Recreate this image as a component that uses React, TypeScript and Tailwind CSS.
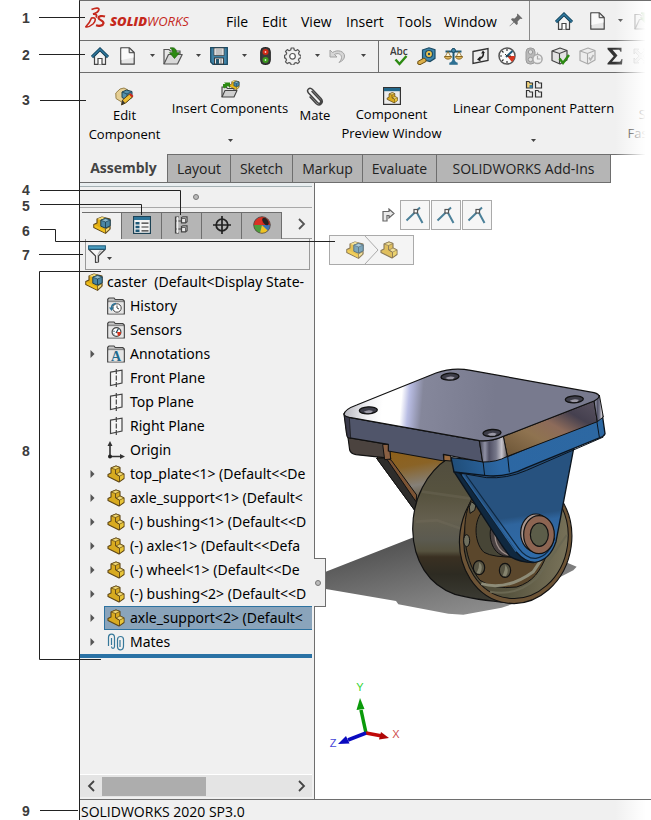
import React from "react";

type IconProps = { children: React.ReactNode; w?: number; h?: number };

function Icon({ children, w = 18, h = 18 }: IconProps) {
  return (
    <svg width={w} height={h} viewBox={`0 0 ${w} ${h}`} fill="none" className="shrink-0" aria-hidden="true">
      {children}
    </svg>
  );
}

/* ---------- shared icons ---------- */

function PartShape() {
  return (
    <>
      <path d="M1 9.5 4 8V3l5-2 4 1.5V7l4 2v4.5L12 17 1 11.5Z" fill="#d8aa1f" stroke="#5e4616" strokeWidth="1.1" strokeLinejoin="round" />
      <path d="M4 3l5-2 4 1.500-4.500 2ZM9 9l4-2 4 2-4.500 2.200Z" fill="#f0d873" stroke="#5e4616" strokeWidth=".7" strokeLinejoin="round" />
      <path d="M8.500 4.500V9l4 2.200V17" stroke="#5e4616" strokeWidth=".9" />
      <path d="M13 11.500 16.500 9.800V13L13 15.800Z" fill="#e8c63a" />
    </>
  );
}

const PartIcon = () => (
  <Icon>
    <PartShape />
  </Icon>
);

function AssemblyShape() {
  return (
    <>
      <path d="M.8 8.500 4 7V3l5-2 8 2v10L12.500 17.300.8 11.500Z" fill="#e0ad14" stroke="#5e4616" strokeWidth="1.100" strokeLinejoin="round" />
      <path d="M4 3l5-2 3 .800L8 4Z" fill="#f3dc7c" />
      <path d="M1.500 8.800 12 14.200v2.500L1.500 11.200Z" fill="#f1c11d" />
      <path d="M12.500 13 16.800 10.500V13l-4.300 4Z" fill="#f3dc7c" stroke="#5e4616" strokeWidth=".7" />
      <path d="M7.800 4.200 12.500 2.500l4.700 1.500v5.800l-4.700 2.400-4.700-2Z" fill="#4a86a4" stroke="#1d4254" strokeWidth="1" strokeLinejoin="round" />
      <path d="M7.800 4.200 12.500 2.500l4.700 1.500L12.500 6Z" fill="#8fbacd" stroke="#1d4254" strokeWidth=".7" />
      <path d="M12.500 6v6" stroke="#1d4254" strokeWidth=".9" />
    </>
  );
}

const AssemblyIcon = () => (
  <Icon>
    <AssemblyShape />
  </Icon>
);

const HomeIcon = () => (
  <Icon>
    <path d="M3.500 9v8.300h11V9L9 3.500Z" fill="#f4f4f4" stroke="#444" strokeWidth="1.200" />
    <path d="M7 17.500v-6h4v6" fill="#fff" stroke="#444" strokeWidth="1.200" />
    <path d="M1 10 9 2.200 17 10" stroke="#174a63" strokeWidth="3.200" />
    <path d="M1.200 9.800 9 2.200l7.800 7.600" stroke="#3179a0" strokeWidth="1.200" />
  </Icon>
);

const DocIcon = () => (
  <Icon w={15}>
    <path d="M.8.800h8.700l4.700 4.700v11.700H.8Z" fill="#e6e6e6" stroke="#444" strokeWidth="1.200" strokeLinejoin="round" />
    <path d="M1.500 1.500h7v5h5v4L1.500 13Z" fill="#fafafa" />
    <path d="M9.200 1v4.700h4.800" stroke="#444" />
  </Icon>
);

const OpenIcon = () => (
  <Icon w={20}>
    <path d="M1 17V2.500h5L7.500 4H17v4" fill="#e7e7e7" stroke="#555" strokeWidth="1.200" />
    <path d="M1 17 5.500 7.500H19.200L14.500 17Z" fill="#d9d9d9" stroke="#555" strokeWidth="1.200" strokeLinejoin="round" />
    <path d="M7 1c4-1 6.500.500 6.500 4.700h3L11.500 11.500 6.500 5.700h3.200C9.700 3.500 9 2 7 1Z" fill="#2c8a12" stroke="#1d6108" strokeWidth=".7" />
  </Icon>
);

const Caret = () => (
  <Icon w={5} h={3}>
    <path d="M0 0h5L2.500 3Z" fill="#444" />
  </Icon>
);

/* ---------- quick access toolbar ---------- */

const SaveIcon = () => (
  <Icon>
    <path d="M.7.700h16.600v16.600H3L.7 15Z" fill="#3f82a6" stroke="#1c4b64" strokeWidth="1.300" />
    <rect x="4" y="1" width="10" height="7.500" fill="#f5f5f5" stroke="#444" strokeWidth=".8" />
    <path d="M5.500 3h7M5.500 5h7M5.500 7h7" stroke="#777" strokeWidth=".8" />
    <rect x="4.500" y="11" width="9" height="6" fill="#e4e4e4" stroke="#333" strokeWidth=".9" />
    <rect x="6" y="12" width="3" height="5" fill="#255870" />
    <path d="M11 12v5" stroke="#777" />
  </Icon>
);

const LightIcon = () => (
  <Icon w={11}>
    <rect x=".7" y=".5" width="9.600" height="17" rx="4" fill="#3b3b3b" stroke="#222" />
    <circle cx="5.500" cy="5" r="3" fill="#cf2a17" />
    <circle cx="5.500" cy="13" r="3" fill="#3c9a1e" />
    <path d="M4.500 5h2M5.500 4v2M4.500 13h2M5.500 12v2" stroke="#fff" strokeWidth=".6" />
  </Icon>
);

const GearIcon = () => (
  <Icon w={17}>
    <path
      d="m7.200 1 2.600 0 .5 2 1.600.700 1.800-1.100 1.800 1.800-1 1.800.700 1.600 1.800.500v2.600l-1.900.500-.700 1.600 1.100 1.800-1.800 1.800-1.800-1-1.600.700-.5 1.900H7.200l-.5-1.900-1.600-.700-1.800 1-1.800-1.800 1-1.800-.700-1.600-1.200-.500V8.300l1.400-.500.700-1.600-1.200-1.800 1.800-1.800 1.800 1.100 1.600-.700Z"
      fill="#f0f0f0"
      stroke="#555"
      strokeWidth="1.200"
      strokeLinejoin="round"
    />
    <circle cx="8.500" cy="9.300" r="2.800" fill="#fff" stroke="#555" strokeWidth="1.200" />
  </Icon>
);

const UndoIcon = () => (
  <Icon w={17}>
    <path d="M1 3v7h7L5.500 7.500C9 5.500 12.500 7 12.500 10.500c0 2-1 3.500-2.500 5 3.500-1.500 5.500-3.500 5.500-6.500C15.500 4.500 9 2 3.500 5.500Z" fill="#d6d6d6" stroke="#a2a2a2" />
  </Icon>
);

const SpellIcon = () => (
  <Icon w={19} h={20}>
    <text x="0" y="9" fontFamily="Open Sans, sans-serif" fontSize="10" fontWeight="600" fill="#3c3c3c">Abc</text>
    <path d="m5.500 13.500 4 4.500 7-8" stroke="#2c8a12" strokeWidth="2.400" />
  </Icon>
);

const MeasureIcon = () => (
  <Icon w={19}>
    <path d="M5.500 3 12 .800l6 2v8.500l-5 3.200-7.500-2Z" fill="#3f86ab" stroke="#1c4b64" strokeWidth="1.200" />
    <path d="M.8 14.500 7 11l2 1.500v2l-6 3.200-2.200-.7Z" fill="#dcb04a" stroke="#6b4e12" strokeWidth="1" />
    <circle cx="12" cy="7" r="3.500" fill="#f0c64f" stroke="#1c4b64" strokeWidth="1.200" />
    <circle cx="12" cy="7" r="1.200" fill="#1c4b64" />
  </Icon>
);

const MassIcon = () => (
  <Icon w={19}>
    <path d="M9.500 1v15M1.500 4.500h16M5.500 16.500h8" stroke="#1c5876" strokeWidth="2" />
    <circle cx="9.500" cy="3.500" r="2" fill="#3f86ab" stroke="#1c4b64" />
    <path d="m1 10 3-5.500L7 10ZM12 10l3-5.500L18 10Z" fill="#fff6dd" stroke="#76540f" strokeWidth=".7" />
    <path d="M.5 9.500h7c0 3.500-7 3.500-7 0ZM11.500 9.500h7c0 3.500-7 3.500-7 0Z" fill="#e0b65a" stroke="#76540f" strokeWidth=".8" />
    <path d="M5 17.500 9.500 12l4.500 5.500Z" fill="#2d7094" />
  </Icon>
);

const SectionIcon = () => (
  <Icon w={17}>
    <path d="m1 4.500 15-3v12l-15 3Z" fill="#eee" stroke="#333" strokeWidth="1.300" />
    <path d="M11 5c1 2.500 0 5.500-3.500 6.500" stroke="#222" strokeWidth="1.600" />
    <path d="M5 12.500 8.500 9v5.500ZM9 6.500 11 3.500l2 2.500Z" fill="#222" />
  </Icon>
);

const GaugeIcon = () => (
  <Icon>
    <circle cx="9" cy="9" r="8" fill="#fafafa" stroke="#555" strokeWidth="1.500" />
    <path d="M9 9h8a8 8 0 0 1-3 6Z" fill="#d9341c" />
    <path d="M9 2v2M2 9h2M4 4l1.500 1.500M4 14l1.500-1.500M9 14v2" stroke="#333" strokeWidth="1.200" />
    <path d="m8 10 6.500-6" stroke="#1d5877" strokeWidth="2" />
    <path d="M9 9 7 7M9 9h4" stroke="#333" />
  </Icon>
);

const PerfIcon = () => (
  <Icon w={19}>
    <rect x="1" y="1" width="9" height="16" rx="4" fill="#b9b9b9" stroke="#9a9a9a" />
    <circle cx="5.500" cy="5" r="2.200" fill="#dedede" stroke="#999" />
    <circle cx="5.500" cy="12.500" r="2.200" fill="#dedede" stroke="#999" />
    <circle cx="12.500" cy="12" r="4.600" fill="#f0f0f0" stroke="#aaa" strokeWidth="1.500" />
    <path d="M12.500 9v3h3M12.500 5.500v2" stroke="#aaa" strokeWidth="1.200" />
  </Icon>
);

function CubeCheck({ stroke, check, fill, bold }: { stroke: string; check: string; fill: string; bold?: boolean }) {
  return (
    <Icon w={19}>
      <path d="M1 4 9 1l7 2.500v9.500L9 17 1 13.500Z" fill={fill} stroke={stroke} strokeWidth="1.200" strokeLinejoin="round" />
      <path d="M1 4l7.500 2.500L16 3.500M8.500 6.500V17" stroke={stroke} strokeWidth="1.100" />
      {bold ? (
        <path d="m8.500 11.500 3.500 4.500 6-8" stroke={check} strokeWidth="2.400" />
      ) : (
        <path d="m10 10.500 1.500 2.500 3-5" stroke={check} strokeWidth="1.600" />
      )}
    </Icon>
  );
}

const SigmaIcon = () => (
  <Icon w={16}>
    <path d="M.5.800h14v4h-1.200C13 3.200 12.500 2.800 11 2.800H5.500l5 5.800-5.500 6.200h6.500c1.800 0 2.500-.8 3-2.800h1l-.5 5.500H.5v-1.300l6.200-7L.5 2.200Z" fill="#333" />
  </Icon>
);

const ExplodeIcon = () => (
  <Icon>
    <path d="M2 2h5L5.500 3.500l3.500 3.500 3.500-3.500L11 2h5v5l-1.500-1.500L11 9l3.500 3.500L16 11v5h-5l1.500-1.500L9 11l-3.500 3.500L7 16H2v-5l1.500 1.500L7 9 3.500 5.500 2 7Z" fill="#ddd" stroke="#aaa" strokeWidth=".8" />
  </Icon>
);

const PinIcon = () => (
  <Icon w={14} h={14}>
    <path d="m8.500.500 5 5-1.300.600-1-.300-2.600 2.600.2 2.600-1.300 1L5 9.500.8 13.300.5 13 4.500 9 2 6.500l1-1.300 2.600.2L8.200 2.800l-.3-1Z" fill="#6a6a6a" />
  </Icon>
);

/* ---------- ribbon icons ---------- */

const EditComponentIcon = () => (
  <Icon w={19} h={19}>
    <path d="M.8 6 5 2l4-1 4 2v11l-4 2.500-8-5Z" fill="#e6cf94" stroke="#99824a" />
    <path d="M7 5 11.500 3 17 4.500v6L12 13 7 10.500Z" fill="#5590ac" stroke="#1d4254" />
    <path d="M7 5l5 2 5-2.500M12 7v5" stroke="#1d4254" strokeWidth=".8" />
    <path d="m6.500 18 1-5 7-6 3 3-7 6Z" fill="#edbd35" stroke="#4d3a10" strokeWidth=".9" />
    <path d="m14 7.500 1.500-1.300 3 2.800-1.500 1.500Z" fill="#d1281c" />
    <path d="m6.500 18 1-5 2.500 3Z" fill="#333" />
  </Icon>
);

const InsertComponentIcon = () => (
  <Icon w={19}>
    <path d="M1 17V7h4l1.500 1.500H13V11" fill="#ddd" stroke="#444" strokeWidth="1.100" />
    <path d="M1 17 4 10.500h12L13 17Z" fill="#cfcfcf" stroke="#444" strokeWidth="1.100" strokeLinejoin="round" />
    <path d="M2 8V4l5.500-.2V5L3.500 7ZM3 2.500h6V8L7 6 3.500 8.500 2.500 6.500 5 4.500Z" fill="#2c8a12" />
    <g transform="translate(8.500 0) scale(.56)">
      <AssemblyShape />
    </g>
  </Icon>
);

const ClipIcon = () => (
  <Icon w={18} h={19}>
    <path d="M6 4.500 14 13c2 2.500-.5 4.500-2.500 2.500L2.500 6C0 3 3.500-.500 6.500 2.500L15 11.500c3.500 4.500-1.500 8.500-5 5L4 10" stroke="#444" strokeWidth="1.500" strokeLinecap="round" />
  </Icon>
);

const PreviewIcon = () => (
  <Icon>
    <rect x=".6" y=".6" width="16.800" height="16.800" fill="#ececec" stroke="#333" strokeWidth="1.200" />
    <path d="M1 1h16v3.200H1Z" fill="#23688b" />
    <g transform="translate(3.500 5) scale(.64)">
      <PartShape />
    </g>
  </Icon>
);

const PatternIcon = () => (
  <Icon>
    <path d="M1.500 1.500H4L5 3h2.500v5h-6Z" fill="#f1d27a" stroke="#333" strokeWidth="1.200" />
    <path d="M10.500 1.500H13L14 3h2.500v5h-6ZM1.500 10.500H4L5 12h2.500v5h-6ZM10.500 10.500H13l1 1.500h2.500v5h-6Z" fill="#eee" stroke="#333" strokeWidth="1.200" />
    <path d="M4.500 5h3v3h-3Z" fill="#3a7d9f" />
  </Icon>
);

const FastenerIcon = () => (
  <Icon>
    <path d="M1 1h8v6H1ZM3 7v10h4V7" fill="#ddd" stroke="#555" />
  </Icon>
);

/* ---------- panel icons ---------- */

const PropertyIcon = () => (
  <Icon>
    <rect x=".6" y=".6" width="16.800" height="16.800" fill="#f4f4f4" stroke="#1d4254" strokeWidth="1.200" />
    <path d="M1 1h16v3H1Z" fill="#2d7498" />
    <path d="M2.500 6h4v2.500h-4ZM2.500 9.800h4v2.500h-4ZM2.500 13.500h4V16h-4Z" fill="#1d5877" />
    <path d="M8.500 7.200h7M8.500 11h7M8.500 14.800h7" stroke="#333" strokeWidth="1.200" />
  </Icon>
);

const ConfigIcon = () => (
  <Icon w={15}>
    <path d="M5 1H1.500v16H5M1.500 5H7M1.500 13H7" stroke="#444" strokeWidth="1.200" />
    <path d="M3.500 1v16" stroke="#eee" strokeWidth="1.500" />
    <path d="M7.500 1.500 9 .800h4v5l-1.500 1h-4ZM7.500 10.500 9 9.800h4v5l-1.500 1h-4Z" fill="#e9e9e9" stroke="#444" strokeWidth="1.200" />
    <path d="M7.500 2.500h4v4M7.500 11.500h4v4" stroke="#444" strokeWidth=".8" />
  </Icon>
);

const TargetIcon = () => (
  <Icon>
    <circle cx="9" cy="9" r="5.800" stroke="#222" strokeWidth="1.800" />
    <path d="M9 0v18M0 9h18" stroke="#222" strokeWidth="1.700" />
  </Icon>
);

const AppearanceIcon = () => (
  <Icon>
    <circle cx="9" cy="9" r="8.300" fill="#3c73b4" />
    <path d="M9 9 .7 9A8.300 8.300 0 0 1 9.500.700Z" fill="#3f78b8" />
    <path d="M9 9V.700a8.300 8.300 0 0 1 8.300 8.300Z" fill="#d32b1c" />
    <path d="M3 3.500A8.300 8.300 0 0 1 9 .700V9H.700C.7 6 1.500 5 3 3.500Z" fill="#d93224" />
    <path d="M.7 9H9l-2 8A8.300 8.300 0 0 1 .7 9Z" fill="#4d9d3b" />
    <path d="M9 9 7 17a8.300 8.300 0 0 0 8-2.500Z" fill="#efc321" />
    <path d="M9 9h8.300a8.300 8.300 0 0 1-2.300 5.500Z" fill="#3c73b4" />
    <ellipse cx="12.500" cy="5.500" rx="2.400" ry="4.200" transform="rotate(-35 12.500 5.500)" fill="#222" />
    <circle cx="9" cy="9" r="8.300" stroke="#5b4b3f" strokeWidth=".8" />
  </Icon>
);

const FilterIcon = () => (
  <Icon>
    <path d="M1 4.500h16l-6.500 6.500v6l-3 .500V11Z" fill="#f6f6f6" stroke="#444" strokeWidth="1.200" strokeLinejoin="round" />
    <path d="M11.500 5.500h3L10 10v6.500l-.8.200V10Z" fill="#b9b9b9" />
    <rect x=".6" y=".8" width="16.800" height="3.400" fill="#4a9dc0" stroke="#1c5876" />
  </Icon>
);

function FolderIcon({ children }: { children: React.ReactNode }) {
  return (
    <Icon>
      <path d="M.7 17V2.200L2 1h5l1.200 1.500H15.800L17.300 4v13Z" fill="#c9c9c9" stroke="#444" strokeWidth="1.200" />
      <path d="M1.500 5.500h15v11h-15Z" fill="#e6e6e6" />
      <path d="M1 4.200h16" stroke="#555" strokeWidth=".8" />
      {children}
    </Icon>
  );
}

const HistoryIcon = () => (
  <FolderIcon>
    <circle cx="10" cy="11" r="4.200" fill="#fff" stroke="#444" />
    <path d="M10 8.500V11l2 1" stroke="#444" />
    <path d="M9 6.500c-3 0-4.500 2-4.500 5" stroke="#2d7498" strokeWidth="1.600" />
    <path d="M2 10.500h5L4.500 14Z" fill="#2d7498" />
  </FolderIcon>
);

const SensorIcon = () => (
  <FolderIcon>
    <circle cx="9.500" cy="11" r="4.400" fill="#fff" stroke="#444" strokeWidth="1.200" />
    <path d="M10 11h4a4 4 0 0 1-3 4Z" fill="#d9341c" />
    <path d="m9 12 2.500-4.500M6.500 10l1 .500M6.500 13h1" stroke="#1d4254" strokeWidth="1.200" />
  </FolderIcon>
);

const AnnotationIcon = () => (
  <FolderIcon>
    <text x="9" y="16" textAnchor="middle" fontFamily="Liberation Serif, serif" fontWeight="700" fontSize="14" fill="#1f6a8e">A</text>
  </FolderIcon>
);

const PlaneIcon = () => (
  <Icon>
    <path d="m3.500 3.200 11.500-2V14L3.500 16.500Z" fill="#f5f5f5" stroke="#444" strokeWidth="1.200" />
    <path d="M9.300 0v18" stroke="#444" strokeWidth="1.200" strokeDasharray="5 1.500" />
  </Icon>
);

const OriginIcon = () => (
  <Icon>
    <path d="M3 3v12.500h12" stroke="#333" strokeWidth="1.600" />
    <path d="M.5 5 3 0l2.500 5ZM13 13l5 2.500-5 2.500Z" fill="#333" />
    <circle cx="3" cy="15.500" r="2" fill="#222" />
  </Icon>
);

const MatesIcon = () => (
  <Icon>
    <path d="M4.500 5v7M1.500 13V4.500C1.500 0 7.500 0 7.500 4.500v9c0 2.500-3 2.500-3 0" stroke="#36789a" strokeWidth="1.200" />
    <path d="M13 7v7M10.500 14V6.500c0-4 6-4 6 0V13c0 5-5.500 5-6 1" stroke="#36789a" strokeWidth="1.200" />
  </Icon>
);

const MateLineIcon = () => (
  <Icon w={20}>
    <path d="M1.500 14.500 15 1.500M11 5l6.500 12" stroke="#4b8099" strokeWidth="2" />
    <rect x="9" y="3.500" width="3.500" height="3.500" fill="#fff" stroke="#555" strokeWidth="1.200" />
  </Icon>
);

/* ---------- header ---------- */

function Logo() {
  return (
    <div className="flex h-full w-[132px] shrink-0 items-center gap-1 pl-[5px] text-[#c5281c]">
      <svg width="21" height="22" viewBox="0 0 21 22" fill="none" className="mb-[6px]" aria-hidden="true">
        <path d="M6.500 2.500C11 .500 14.500.500 13.800 3 13 5.200 10 6.500 8 7.200c3.500-.300 4.500 1 3 3.300" stroke="currentColor" strokeWidth="1.800" />
        <path d="M6.500 11c5-1 4.500 3 1.500 6C5.500 19 3 20.500.8 19.800 3 17.500 5.500 14 6.500 11Z" stroke="currentColor" strokeWidth="1.600" />
        <path d="M20 9.500c-3-1-6.500-.5-6.500 1.500 0 2 5.500 2.500 5 5.300-.5 2.500-4.500 3-7.500 2" stroke="currentColor" strokeWidth="2.200" />
      </svg>
      <span className="font-['Open_Sans',sans-serif] text-[13px] leading-4 italic">
        <b className="font-extrabold">SOLID</b>WORKS
      </span>
    </div>
  );
}

function MenuBar() {
  return (
    <header className="flex h-10 items-center overflow-hidden border-b border-[#6e6e6e] bg-[#f0f0f0]">
      <Logo />
      <nav className="flex h-full shrink-0 items-center pt-[3px] pl-[14px]">
        <button className="w-9 text-left">File</button>
        <button className="w-[39px] text-left">Edit</button>
        <button className="w-[45px] text-left">View</button>
        <button className="w-[51px] text-left">Insert</button>
        <button className="w-[47px] text-left">Tools</button>
        <button className="w-[65px] text-left">Window</button>
        <button className="pb-1" aria-label="Pin menu"><PinIcon /></button>
      </nav>
      <div className="ml-[6px] flex h-full shrink-0 items-center border-l border-[#8a8a8a] pl-[25px]">
        <button aria-label="Home" className="w-[35px]"><HomeIcon /></button>
        <button aria-label="New" className="w-[28px]"><DocIcon /></button>
        <button aria-label="New options" className="w-[16px]"><Caret /></button>
        <button aria-label="Open"><OpenIcon /></button>
      </div>
    </header>
  );
}

function Tool({ label, className, children }: { label: string; className: string; children: React.ReactNode }) {
  return (
    <button aria-label={label} className={`flex shrink-0 justify-start ${className}`}>
      {children}
    </button>
  );
}

function ToolBar() {
  return (
    <div className="flex h-8 items-center overflow-hidden border-b border-[#6e6e6e] bg-[#f0f0f0] pl-[11px] *:pb-[2px]">
      <Tool label="Home" className="w-[29px]"><HomeIcon /></Tool>
      <Tool label="New" className="w-[30px]"><DocIcon /></Tool>
      <Tool label="New options" className="w-[13px]"><Caret /></Tool>
      <Tool label="Open" className="w-[33px]"><OpenIcon /></Tool>
      <Tool label="Open options" className="w-[14px]"><Caret /></Tool>
      <Tool label="Save" className="w-[32px]"><SaveIcon /></Tool>
      <Tool label="Save options" className="w-[18px]"><Caret /></Tool>
      <Tool label="Rebuild" className="w-[24px]"><LightIcon /></Tool>
      <Tool label="Options" className="w-[31px]"><GearIcon /></Tool>
      <Tool label="More options" className="w-[14px]"><Caret /></Tool>
      <Tool label="Undo" className="w-[32px]"><UndoIcon /></Tool>
      <Tool label="Undo options" className="w-[17px]"><Caret /></Tool>
      <div className="flex h-full items-center border-l border-[#6e6e6e] pl-[11px]">
        <Tool label="Spelling" className="w-[27px]"><SpellIcon /></Tool>
        <Tool label="Measure" className="w-[27px]"><MeasureIcon /></Tool>
        <Tool label="Mass properties" className="w-[28px]"><MassIcon /></Tool>
        <Tool label="Section properties" className="w-[26px]"><SectionIcon /></Tool>
        <Tool label="Sensor" className="w-[27px]"><GaugeIcon /></Tool>
        <Tool label="Performance" className="w-[26px]"><PerfIcon /></Tool>
        <Tool label="Check" className="w-[28px]"><CubeCheck stroke="#444" check="#2c8a12" fill="#e2e2e2" bold /></Tool>
        <Tool label="Check active" className="w-[28px]"><CubeCheck stroke="#aaa" check="#b5b5b5" fill="#ececec" /></Tool>
        <Tool label="Equations" className="w-[25px]"><SigmaIcon /></Tool>
        <Tool label="Explode" className="w-[18px]"><ExplodeIcon /></Tool>
      </div>
    </div>
  );
}

type RibbonProps = { icon: React.ReactNode; label: React.ReactNode; className: string; menu?: boolean };

function RibbonButton({ icon, label, className, menu }: RibbonProps) {
  return (
    <button className={`flex shrink-0 flex-col items-center whitespace-nowrap leading-[19px] ${menu ? "pt-[7px]" : "pt-[14px]"} ${className}`}>
      {icon}
      <span className={menu ? "pt-px" : ""}>{label}</span>
      {menu && <span className="pt-[21px]"><Caret /></span>}
    </button>
  );
}

function Ribbon() {
  return (
    <div className="flex h-[81px] items-start gap-[10px] overflow-hidden bg-[#f0f0f0] pl-2 text-[13px]">
      <RibbonButton className="w-[73px]" icon={<EditComponentIcon />} label={<>Edit<br />Component</>} />
      <RibbonButton className="w-[118px]" menu icon={<InsertComponentIcon />} label="Insert Components" />
      <RibbonButton className="w-[32px]" icon={<ClipIcon />} label="Mate" />
      <RibbonButton className="w-[101px]" icon={<PreviewIcon />} label={<>Component<br />Preview Window</>} />
      <RibbonButton className="w-[163px]" menu icon={<PatternIcon />} label="Linear Component Pattern" />
      <RibbonButton className="w-[64px]" icon={<FastenerIcon />} label={<>Smart<br />Fasteners</>} />
    </div>
  );
}

function RibbonTabs() {
  const tab = "h-[29px] shrink-0 border-y border-r border-[#6e6e6e] bg-[#b5b5b5] text-center text-[#222]";
  return (
    <div className="flex h-[29px] bg-white">
      <div className="w-[88px] shrink-0 border-r border-b border-[#6e6e6e] bg-[#f0f0f0] text-center font-bold text-[#444]">
        <button className="h-7">Assembly</button>
      </div>
      <button className={`${tab} w-[63px]`}>Layout</button>
      <button className={`${tab} w-[62px]`}>Sketch</button>
      <button className={`${tab} w-[70px]`}>Markup</button>
      <button className={`${tab} w-[74px]`}>Evaluate</button>
      <button className={`${tab} w-[174px]`}>SOLIDWORKS Add-Ins</button>
      <div className="flex-1 border-t border-[#6e6e6e]" />
    </div>
  );
}

/* ---------- feature manager ---------- */

type TreeItem = { name: string; icon: React.ReactNode; expandable?: boolean; selected?: boolean };

const treeItems: TreeItem[] = [
  { name: "History", icon: <HistoryIcon /> },
  { name: "Sensors", icon: <SensorIcon /> },
  { name: "Annotations", icon: <AnnotationIcon />, expandable: true },
  { name: "Front Plane", icon: <PlaneIcon /> },
  { name: "Top Plane", icon: <PlaneIcon /> },
  { name: "Right Plane", icon: <PlaneIcon /> },
  { name: "Origin", icon: <OriginIcon /> },
  { name: "top_plate<1> (Default<<De", icon: <PartIcon />, expandable: true },
  { name: "axle_support<1> (Default<", icon: <PartIcon />, expandable: true },
  { name: "(-) bushing<1> (Default<<D", icon: <PartIcon />, expandable: true },
  { name: "(-) axle<1> (Default<<Defa", icon: <PartIcon />, expandable: true },
  { name: "(-) wheel<1> (Default<<De", icon: <PartIcon />, expandable: true },
  { name: "(-) bushing<2> (Default<<D", icon: <PartIcon />, expandable: true },
  { name: "axle_support<2> (Default<", icon: <PartIcon />, expandable: true, selected: true },
  { name: "Mates", icon: <MatesIcon />, expandable: true },
];

function TreeRow({ item }: { item: TreeItem }) {
  return (
    <li className="flex h-6 items-center overflow-hidden">
      <span className="flex w-6 shrink-0 justify-center">
        {item.expandable && (
          <button aria-label={`Expand ${item.name}`}>
            <Icon w={5} h={8}>
              <path d="M.5 0v8l4-4Z" fill="#555" />
            </Icon>
          </button>
        )}
      </span>
      <button
        className={`flex h-6 min-w-0 flex-1 items-center gap-[5px] overflow-hidden border pl-[2px] whitespace-nowrap ${
          item.selected ? "border-r-0 border-[#2d72a0] bg-[#8aa4bb] pr-px" : "border-transparent"
        }`}
      >
        {item.icon}
        <span>{item.name}</span>
      </button>
    </li>
  );
}

function PanelTabs() {
  const tab = "flex h-[26px] w-10 items-center justify-center border-r border-[#6e6e6e] bg-[#b5b5b5]";
  return (
    <div className="mr-[2px] ml-[2px] flex h-[27px] border-b border-[#999]">
      <div className="flex border-t border-[#6e6e6e] *:pb-[2px]">
        <button aria-label="FeatureManager" className="flex h-[26px] w-10 items-center justify-center border-r border-[#6e6e6e] bg-[#f0f0f0]">
          <AssemblyIcon />
        </button>
        <button aria-label="PropertyManager" className={tab}><PropertyIcon /></button>
        <button aria-label="ConfigurationManager" className={tab}><ConfigIcon /></button>
        <button aria-label="DimXpertManager" className={tab}><TargetIcon /></button>
        <button aria-label="DisplayManager" className={tab}><AppearanceIcon /></button>
      </div>
      <button aria-label="More tabs" className="flex flex-1 items-center justify-center pb-[2px] pl-[10px]">
        <Icon w={8} h={12}>
          <path d="m1 1 5 5-5 5" stroke="#555" strokeWidth="1.800" />
        </Icon>
      </button>
    </div>
  );
}

function Grip() {
  return <span className="block size-[6px] rounded-full border border-[#777] bg-[#bbb]" />;
}

function FeaturePanel() {
  return (
    <aside className="relative z-10 flex w-[235px] shrink-0 flex-col border-r border-[#6e6e6e] bg-[#f0f0f0]">
      <div className="mr-[2px] h-1 border-b border-[#a5b0b3] bg-[#e9eef0]" />
      <div className="mr-[2px] mb-1 flex h-[21px] items-center justify-center border-b border-[#a8a8a8]">
        <Grip />
      </div>
      <PanelTabs />
      <div className="mr-1 ml-[5px] flex h-[31px] items-center gap-px border border-t-0 border-[#999] pl-[2px]">
        <button aria-label="Filter" className="flex items-end gap-px">
          <FilterIcon />
          <span className="pb-[3px]"><Caret /></span>
        </button>
        <input aria-label="Filter tree" className="h-6 min-w-0 flex-1 bg-transparent outline-none" />
      </div>
      <div className="mr-[2px] border-b-4 border-[#2a72a5] font-['Noto_Sans','Open_Sans',sans-serif]">
        <button className="flex h-6 w-full items-center gap-1 overflow-hidden pl-[5px] whitespace-pre">
          <AssemblyIcon />
          <span>caster  (Default&lt;Display State-</span>
        </button>
        <ul>
          {treeItems.map((item) => (
            <TreeRow key={item.name} item={item} />
          ))}
        </ul>
      </div>
      <div className="mt-auto mr-[2px] mb-[2px] flex h-[23px] items-center border-t border-white bg-[#e4e4e4]">
        <button aria-label="Scroll left" className="flex w-[22px] justify-center">
          <Icon w={8} h={12}>
            <path d="M7 1 2 6l5 5" stroke="#444" strokeWidth="1.800" />
          </Icon>
        </button>
        <div className="flex h-[19px] flex-1">
          <div className="w-[104px] bg-[#adadad]" />
        </div>
        <button aria-label="Scroll right" className="flex w-5 justify-center">
          <Icon w={8} h={12}>
            <path d="m1 1 5 5-5 5" stroke="#444" strokeWidth="1.800" />
          </Icon>
        </button>
      </div>
      <div className="absolute top-[375px] -right-3 flex h-[49px] w-3 items-center justify-start border border-l-0 border-[#6e6e6e] bg-[#f0f0f0] pl-px">
        <Grip />
      </div>
    </aside>
  );
}

/* ---------- graphics area ---------- */

function CasterModel() {
  return (
    <svg width="300" height="265" viewBox="0 0 900 795" fill="none" strokeLinejoin="round" aria-label="Caster model" role="img">
      <defs>
        <linearGradient id="top" gradientUnits="userSpaceOnUse" x1="70" y1="150" x2="520" y2="190">
          <stop offset="0" stopColor="#b4b4bb" />
          <stop offset=".16" stopColor="#f0f0f3" />
          <stop offset=".26" stopColor="#ffffff" />
          <stop offset=".38" stopColor="#ffffff" />
          <stop offset=".43" stopColor="#b9bde4" />
          <stop offset=".52" stopColor="#85879b" />
          <stop offset="1" stopColor="#787a8e" />
        </linearGradient>
        <linearGradient id="shadow" x1="0" y1="0" x2=".6" y2="1">
          <stop offset="0" stopColor="#3c3c3c" />
          <stop offset=".4" stopColor="#5c5c5c" />
          <stop offset=".8" stopColor="#7e7e7e" />
          <stop offset="1" stopColor="#8d8d8d" />
        </linearGradient>
        <linearGradient id="tread" x1="0" y1="0" x2="0" y2="1">
          <stop offset="0" stopColor="#514d3e" />
          <stop offset=".25" stopColor="#57533f" />
          <stop offset=".42" stopColor="#645f4e" />
          <stop offset=".56" stopColor="#5b5a50" />
          <stop offset=".64" stopColor="#56523f" />
          <stop offset=".68" stopColor="#3a3022" />
          <stop offset=".8" stopColor="#2d2b22" />
          <stop offset="1" stopColor="#3d3d35" />
        </linearGradient>
        <linearGradient id="rim" x1="0" y1="0" x2="1" y2="0">
          <stop offset="0" stopColor="#4b4636" />
          <stop offset=".5" stopColor="#57543f" />
          <stop offset="1" stopColor="#787259" />
        </linearGradient>
        <linearGradient id="copper" x1="0" y1="1" x2="1" y2="0">
          <stop offset="0" stopColor="#6a5335" />
          <stop offset=".35" stopColor="#8f7350" />
          <stop offset=".55" stopColor="#8d6b5a" />
          <stop offset=".75" stopColor="#45404f" />
          <stop offset="1" stopColor="#5a5361" />
        </linearGradient>
        <linearGradient id="gold" x1="0" y1="0" x2=".2" y2="1">
          <stop offset="0" stopColor="#8f5d12" />
          <stop offset=".4" stopColor="#8a6326" />
          <stop offset=".7" stopColor="#858078" />
          <stop offset="1" stopColor="#5a4c30" />
        </linearGradient>
        <linearGradient id="blueEdge" gradientUnits="userSpaceOnUse" x1="390" y1="330" x2="855" y2="220">
          <stop offset="0" stopColor="#1f4c77" />
          <stop offset=".3" stopColor="#2c67a3" />
          <stop offset="1" stopColor="#2d68a2" />
        </linearGradient>
        <linearGradient id="blueFace" gradientUnits="userSpaceOnUse" x1="600" y1="340" x2="640" y2="620">
          <stop offset="0" stopColor="#27527f" />
          <stop offset=".5" stopColor="#27527f" />
          <stop offset=".58" stopColor="#2f659e" />
          <stop offset="1" stopColor="#2f6caa" />
        </linearGradient>
        <linearGradient id="chrome" x1="0" y1="0" x2="1" y2="0">
          <stop offset="0" stopColor="#3e3f4e" />
          <stop offset=".2" stopColor="#8f90a4" />
          <stop offset=".35" stopColor="#505064" />
          <stop offset=".6" stopColor="#77788a" />
          <stop offset=".8" stopColor="#c6c4cc" />
          <stop offset="1" stopColor="#5b5557" />
        </linearGradient>
      </defs>

      {/* ground shadow */}
      <path d="M0 657 277 548 500 500 738 622 770 635 760 646 690 682 600 740 545 758 430 779 385 776 235 748 228 738 0 699Z" fill="url(#shadow)" />

      {/* rear support */}
      <path d="M170 310 208 268 385 300 380 325 292 440 284 466Z" fill="url(#gold)" stroke="#111" strokeWidth="3" />
      <path d="M170 310 200 308 292 436 284 466Z" fill="#2e2d2b" stroke="#111" strokeWidth="3" />
      <path d="M196 306 214 316 290 420 288 440Z" fill="#7c5434" stroke="#111" strokeWidth="3" />
      <path d="M84 247 206 268 212 312 192 308 108 299Q92 296 89 285Z" fill="#4b433f" stroke="#111" strokeWidth="3.500" />
      <path d="M188 268 208 268 212 312 194 314Z" fill="#8a6043" stroke="#111" strokeWidth="3" />

      {/* wheel tread */}
      <path d="M385 310C320 352 278 430 278 522C280 618 325 690 405 718Q470 736 590 745L640 560 460 330Z" fill="url(#tread)" stroke="#111" strokeWidth="3.500" />
      <path d="M306 410 450 430M288 500 350 496 420 520" stroke="#777260" strokeWidth="8" opacity=".3" />

      {/* wheel rim and hub */}
      <ellipse cx="587" cy="552" rx="168" ry="194" transform="rotate(8 587 552)" fill="#6d5436" stroke="#111" strokeWidth="3.500" />
      <ellipse cx="588" cy="550" rx="156" ry="181" transform="rotate(8 588 550)" fill="url(#rim)" stroke="#111" strokeWidth="3" />
      <path d="M462 420C420 480 425 610 480 676Q520 704 590 696C640 680 660 650 680 600L600 450Z" fill="#5b472c" stroke="#111" strokeWidth="3" />
      <path d="M484 686Q560 708 640 650L700 560" stroke="#8e8c78" strokeWidth="9" />
      <path d="M510 710Q590 725 650 670L740 540" stroke="#6b6853" strokeWidth="6" />
      <path d="M500 460C460 480 458 560 492 592Q520 608 590 606L560 500Z" fill="#474536" stroke="#111" strokeWidth="3" />
      <path d="M518 505C502 530 510 600 560 604L600 610 590 540Z" fill="#4a4242" stroke="#111" strokeWidth="3" />
      <path d="M530 520C518 550 530 590 570 602" stroke="#9c8e8a" strokeWidth="4" />
      <ellipse cx="440" cy="557" rx="9" ry="18" fill="#70705f" stroke="#111" strokeWidth="3" />
      <path d="M454 440Q444 455 450 475L464 466 468 450Z" fill="#70705f" stroke="#111" strokeWidth="3" />
      <ellipse cx="477" cy="638" rx="17" ry="21" fill="#575443" stroke="#111" strokeWidth="3.500" />
      <path d="M478 622q14 14 2 34l-10-2q8-16 8-32Z" fill="#85836e" />
      <ellipse cx="555" cy="646" rx="17" ry="21" fill="#575443" stroke="#111" strokeWidth="3.500" />
      <path d="M556 630q14 14 2 34l-10-2q8-16 8-32Z" fill="#85836e" />

      {/* front support */}
      <path d="M402 350 438 354 600 560 640 623Q600 622 570 605L545 570Z" fill="#10283f" stroke="#0b141e" strokeWidth="4" />
      <path d="M420 354 763 270 708 560Q690 615 645 622Q615 622 588 590Z" fill="url(#blueFace)" stroke="#0b141e" strokeWidth="4" />
      <path d="M438 360 596 580Q620 612 648 610 690 602 704 548" stroke="#0e2740" strokeWidth="3.500" />
      <path d="M428 360 588 590" stroke="#2c639b" strokeWidth="4" />
      <path d="M393 308 490 318 564 304 848 186 855 236Q852 244 840 248L620 338Q560 368 500 362L402 351Z" fill="url(#blueEdge)" stroke="#0b141e" strokeWidth="4" />
      <path d="M402 351 500 368Q560 372 620 346L850 246M489 318 494 362M563 304 568 352M830 196 838 246" stroke="#0b141e" strokeWidth="3" />
      <path d="M372 298 392 302 393 318 370 316Z" fill="#9a6a3e" stroke="#111" strokeWidth="3" />

      {/* axle */}
      <ellipse cx="648" cy="534" rx="46" ry="57" fill="#a9968f" stroke="#111" strokeWidth="3.500" />
      <ellipse cx="657" cy="539" rx="46" ry="57" fill="#8d6552" stroke="#111" strokeWidth="3.500" />
      <ellipse cx="658" cy="539" rx="27" ry="35" fill="#5c5d49" stroke="#111" strokeWidth="3.500" />

      {/* top plate */}
      <path d="M72 176 88 187 478 257 488 321 370 298 372 318 205 288 205 268 84 248Q80 242 79 232Z" fill="#50556a" stroke="#111" strokeWidth="3.500" />
      <path d="M72 176 88 187 92 250 82 246Z" fill="#3a3a4a" stroke="#111" strokeWidth="2" />
      <path d="M550 244 822 138 832 200 562 304Z" fill="url(#copper)" stroke="#111" strokeWidth="3" />
      <path d="M478 257Q520 260 550 244L562 304Q530 322 488 321Z" fill="url(#chrome)" stroke="#111" strokeWidth="3" />
      <path d="M822 138Q838 130 838 120L850 186 832 200Z" fill="url(#chrome)" stroke="#111" strokeWidth="3" />
      <path d="M72 178Q74 163 110 150L348 54Q398 36 452 46L822 113Q852 122 822 138L550 244Q515 260 478 257L88 187Q74 184 72 178Z" fill="url(#top)" stroke="#111" strokeWidth="3.500" />
      {[[390, 65], [145, 166], [763, 133], [516, 234]].map(([x, y]) => (
        <g key={x}>
          <ellipse cx={x} cy={y} rx="27" ry="10.500" transform={`rotate(-3 ${x} ${y})`} fill="#3d3d48" stroke="#111" strokeWidth="4" />
          <path d={`M${x - 14} ${y + 4}q14-8 28-2l-6 6h-14Z`} fill="#9997a4" />
        </g>
      ))}
    </svg>
  );
}

function Triad() {
  return (
    <svg width="74" height="70" viewBox="0 0 74 70" role="img" aria-label="Axis triad" fontFamily="Liberation Sans, sans-serif" fontSize="11" textAnchor="middle">
      <path d="M37 52 32 29" stroke="#0a9a0a" strokeWidth="3.500" />
      <path d="M31 17 27.500 29 35.500 28Z" fill="#0a9a0a" />
      <path d="m37 52 16 3" stroke="#c00808" strokeWidth="3.500" />
      <path d="m60 57-8-6-2 7.500Z" fill="#b00606" />
      <path d="m37 52-18 7" stroke="#0a0ac0" strokeWidth="3.500" />
      <path d="m9 63 8-8 3.500 7.500Z" fill="#0a0ac0" />
      <text x="31" y="10" fill="#35d435">Y</text>
      <text x="67" y="57" fill="#cf5050">X</text>
      <text x="4" y="66" fill="#4646d8">Z</text>
    </svg>
  );
}

function GraphicsArea() {
  const mate = "flex size-[30px] items-center justify-center border border-[#aaa] bg-[#f6f6f6]";
  return (
    <main className="relative min-w-0 flex-1 overflow-hidden bg-white">
      <div className="flex items-center gap-px pt-[17px] pl-[67px]">
        <span className="mr-1">
          <Icon w={13} h={14}>
            <path d="M1 13V3.500h6V1l5 4.500L7 10V7.500H5V13Z" fill="#e9e9e9" stroke="#666" strokeWidth="1.200" />
          </Icon>
        </span>
        <button aria-label="Mate 1" className={mate}><MateLineIcon /></button>
        <button aria-label="Mate 2" className={mate}><MateLineIcon /></button>
        <button aria-label="Mate 3" className={mate}><MateLineIcon /></button>
      </div>
      <div className="mt-[5px] ml-[14px] flex h-[30px] w-[85px] items-center border border-[#aaa] bg-[#f4f4f4] pl-4">
        <button aria-label="caster" className="opacity-70"><AssemblyIcon /></button>
        <Icon w={16} h={28}>
          <path d="m1 0 13 14L1 28" stroke="#aaa" />
        </Icon>
        <button aria-label="axle_support" className="opacity-70"><PartIcon /></button>
      </div>
      <div className="absolute top-[172px] left-[5px]"><CasterModel /></div>
      <div className="absolute bottom-[48px] left-[14px]"><Triad /></div>
    </main>
  );
}

/* ---------- callouts ---------- */

const callouts = [
  { n: 1, at: "top-[10px]" },
  { n: 2, at: "top-[47px]" },
  { n: 3, at: "top-[92px]" },
  { n: 4, at: "top-[182px]" },
  { n: 5, at: "top-[198px]" },
  { n: 6, at: "top-[223px]" },
  { n: 7, at: "top-[247px]" },
  { n: 8, at: "top-[443px]" },
  { n: 9, at: "top-[803px]" },
];

function Callouts() {
  return (
    <div className="pointer-events-none absolute inset-0 z-20 overflow-hidden">
      {callouts.map((c) => (
        <span key={c.n} className={`absolute left-[22px] font-['Liberation_Sans',sans-serif] text-[14px] leading-4 font-bold text-[#3c3c3c] ${c.at}`}>
          {c.n}
        </span>
      ))}
      <svg width="340" height="820" viewBox="0 0 340 820" fill="none" stroke="#222" aria-hidden="true">
        <path d="M39 17.500H85M39 54.500H85M40 100.500H86M40 190.500H180.500V215M40 204.500H141.500V215M40 229.500H55.500V241.500H335M39 254.500H83M101 271.500H39.500V659.500H101M40 810.500H78" />
      </svg>
    </div>
  );
}

export default function App() {
  return (
    <div className="relative min-h-screen overflow-hidden bg-white pl-[79px] font-['Open_Sans','Noto_Sans',sans-serif] text-[14px] leading-5 text-black">
      <div className="flex min-h-screen flex-col border-t border-l border-t-[#6e6e6e] border-l-[#222]">
        <div className="relative">
          <MenuBar />
          <ToolBar />
          <Ribbon />
          <RibbonTabs />
          <div className="pointer-events-none absolute inset-y-0 right-0 w-9 bg-linear-to-r from-transparent to-white to-85%" />
        </div>
        <div className="flex flex-1">
          <FeaturePanel />
          <GraphicsArea />
        </div>
        <footer className="relative h-[21px] border-t border-[#6e6e6e] bg-[#f0f0f0] pt-[2px] pl-px">
          SOLIDWORKS 2020 SP3.0
          <div className="absolute inset-y-0 right-0 w-9 bg-linear-to-r from-transparent to-white to-85%" />
        </footer>
      </div>
      <Callouts />
    </div>
  );
}
